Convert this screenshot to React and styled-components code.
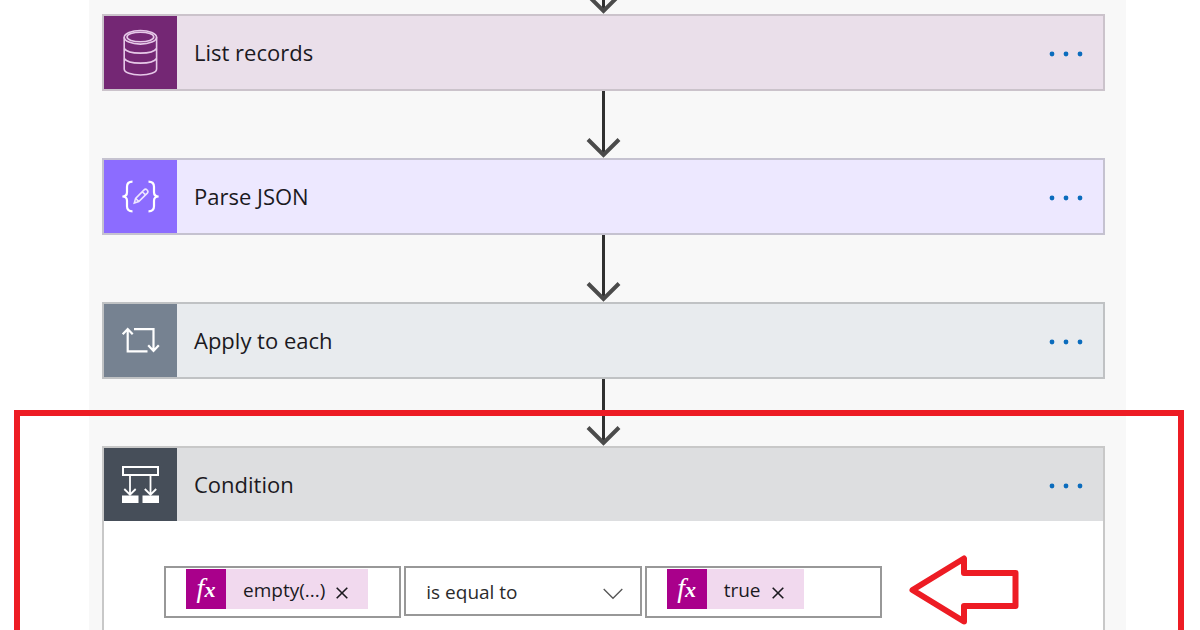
import React from 'react';
import styled, { createGlobalStyle } from 'styled-components';

const GlobalStyle = createGlobalStyle`
  * { box-sizing: border-box; }
  body {
    margin: 0;
    background: #ffffff;
    color: #1b1a1f;
    font-family: 'Open Sans', 'Noto Sans', sans-serif;
  }
`;

const Page = styled.main`
  position: relative;
  display: flex;
  min-height: 100vh;
  padding: 0 74px 0 89px;
`;

const Canvas = styled.section`
  flex: 1;
  display: flex;
  flex-direction: column;
  padding: 0 21px 0 13px;
  background: #f8f8f8;
`;

const ConnectorBox = styled.div`
  display: flex;
  justify-content: center;
  align-items: flex-end;
  height: ${(p) => (p.$short ? 14 : 67)}px;
  overflow: hidden;

  svg { flex: none; display: block; }
`;

const Card = styled.article`
  border: 2px solid ${(p) => p.$border};
  background: #ffffff;

  ${(p) => p.$open && 'flex: 1; border-bottom: 0;'}
`;

const CardHeader = styled.header`
  display: flex;
  align-items: center;
  height: 73px;
  padding-right: 17px;
  background: ${(p) => p.$fill};
`;

const IconTile = styled.div`
  flex: none;
  width: 73px;
  height: 73px;
  background: ${(p) => p.$fill};

  svg { display: block; }
`;

const Title = styled.h2`
  flex: 1;
  margin: 0;
  padding: 0 0 1px 17px;
  font-size: 22px;
  line-height: 32px;
  font-weight: 400;
`;

const MenuButton = styled.button`
  display: flex;
  padding: 3px 0 0;
  border: 0;
  background: none;
  cursor: pointer;
`;

const CardBody = styled.div`
  display: flex;
  align-items: center;
  padding: 34px 60px 0;
`;

const Fields = styled.form`
  flex: 0 1 718px;
  display: grid;
  grid-template-columns: repeat(3, minmax(0, 1fr));
  align-items: start;
  gap: 3px;
`;

const TokenField = styled.div`
  height: 52px;
  padding: 1px 20px;
  border: 2px solid #989898;
  background: #ffffff;
`;

const Token = styled.span`
  display: inline-flex;
  align-items: center;
  height: 40px;
  padding-right: 18px;
  background: #f1d9ee;
  font-size: 19px;
  line-height: 28px;
`;

const TokenText = styled.span`
  padding-top: 2px;
`;

const FxBadge = styled.span`
  display: flex;
  align-items: baseline;
  justify-content: center;
  width: 40px;
  height: 40px;
  margin-right: 17px;
  background: #a9008b;
  color: #ffffff;
  font: italic 400 28px/38px 'Liberation Serif', serif;

  small { font-size: 22px; font-weight: 700; }
`;

const RemoveButton = styled.button`
  display: flex;
  margin-left: 9px;
  padding: 8px 0 0;
  border: 0;
  background: none;
  cursor: pointer;
`;

const SelectBox = styled.div`
  display: grid;
  align-items: center;
  height: 50px;
  border: 2px solid #989898;

  > * { grid-area: 1 / 1; }
  svg { justify-self: end; margin: 6px 17px 0 0; pointer-events: none; }
`;

const OperatorSelect = styled.select`
  width: 100%;
  height: 46px;
  padding: 2px 48px 0 20px;
  border: 0;
  background: #ffffff;
  color: #2b2b2b;
  font: 400 19px/28px 'Open Sans', 'Noto Sans', sans-serif;
  appearance: none;
`;

const Pointer = styled.svg`
  flex: none;
  margin-left: 26px;
`;

const Highlight = styled.div`
  position: absolute;
  top: 410px;
  right: 16px;
  bottom: 0;
  left: 14px;
  border: 6px solid #ed1c24;
  border-bottom: 0;
  pointer-events: none;
`;

const DatabaseIcon = () => (
  <svg width="73" height="73" viewBox="0 0 73 73" fill="none" stroke="#e6c8e8" strokeWidth="1.6" aria-hidden="true">
    <ellipse cx="36.4" cy="21.3" rx="16.2" ry="6.8" />
    <ellipse cx="36.4" cy="21" rx="13.400" ry="4.800" />
    <path d="M20.200 21.300V53c0 3.600 7 6 16.200 6s16.200-2.400 16.200-6V21.300" />
    <path d="M20.200 32.500c2 3.200 8 4.600 16.200 4.600s14.200-1.400 16.200-4.600M20.200 42.500c2 3.200 8 4.600 16.200 4.600s14.200-1.400 16.200-4.600" />
  </svg>
);

const JsonIcon = () => (
  <svg width="73" height="73" viewBox="0 0 73 73" fill="none" stroke="#ffffff" strokeWidth="2.2" aria-hidden="true">
    <path d="M28.500 21.700c-4 0-5.500 1.600-5.500 5v5.500c0 2.800-1.400 4.200-4.600 4.300 3.200.1 4.600 1.500 4.600 4.300v5.500c0 3.400 1.500 5 5.500 5" />
    <path d="M44.500 21.700c4 0 5.500 1.600 5.500 5v5.500c0 2.800 1.400 4.200 4.600 4.300-3.200.1-4.600 1.500-4.600 4.300v5.500c0 3.400-1.500 5-5.500 5" />
    <path d="M30.300 43l1.300-4.600 8.500-8.500c1.900-1.900 5 1.200 3.200 3.200l-8.500 8.500zM38.300 31.700l3.200 3.200M31.600 38.400l3.200 3.200" stroke="#eee6ff" strokeWidth="1.600" />
  </svg>
);

const LoopIcon = () => (
  <svg width="73" height="73" viewBox="0 0 73 73" fill="none" stroke="#ffffff" strokeWidth="2.200" aria-hidden="true">
    <path d="M18.700 30.300l5-5.300 5 5.300M23.700 25v22.300h19.800M30 25.200h19.500v21.600M44.200 41.300l5.300 5.700 5.300-5.700" />
  </svg>
);

const ConditionIcon = () => (
  <svg width="73" height="73" viewBox="0 0 73 73" fill="none" stroke="#ffffff" strokeWidth="2" aria-hidden="true">
    <path d="M19 19h35v8H19z" />
    <path d="M26 27v19M46.500 27v19M20.300 41l5.700 5.700 5.700-5.700M40.800 41l5.700 5.700 5.700-5.700" strokeWidth="1.800" />
    <path d="M18 47.500h16.500V55H18zM38.500 47.500H55V55H38.500z" fill="#ffffff" stroke="none" />
  </svg>
);

const Connector = ({ short }) => (
  <ConnectorBox $short={short}>
    <svg width="35" height="67" viewBox="0 0 35 67" fill="none" aria-hidden="true">
      <path d="M17.500 0v64" stroke="#303030" strokeWidth="3" />
      <path d="M2 48.500l15.500 15.500L33 48.500" stroke="#4b4b4b" strokeWidth="4" />
    </svg>
  </ConnectorBox>
);

const Step = ({ title, icon, tile, fill, border, open, children }) => (
  <Card $border={border} $open={open}>
    <CardHeader $fill={fill}>
      <IconTile $fill={tile}>{icon}</IconTile>
      <Title>{title}</Title>
      <MenuButton type="button" aria-label={`${title} menu`}>
        <svg width="40" height="8" viewBox="0 0 40 8" fill="#0b6cbd" aria-hidden="true">
          <circle cx="6" cy="4" r="2.400" />
          <circle cx="20" cy="4" r="2.400" />
          <circle cx="34" cy="4" r="2.400" />
        </svg>
      </MenuButton>
    </CardHeader>
    {children}
  </Card>
);

const Expression = ({ label, text }) => (
  <TokenField role="group" aria-label={label}>
    <Token>
      <FxBadge aria-hidden="true">f<small>x</small></FxBadge>
      <TokenText>{text}</TokenText>
      <RemoveButton type="button" aria-label={`Remove ${text}`}>
        <svg width="16" height="16" viewBox="0 0 16 16" stroke="#1b1a1f" strokeWidth="1.600" aria-hidden="true">
          <path d="M2.700 2.700l10.600 10.600M13.300 2.700L2.700 13.300" />
        </svg>
      </RemoveButton>
    </Token>
  </TokenField>
);

export default function App() {
  return (
    <>
      <GlobalStyle />
      <Page>
        <Canvas>
          <Connector short />
          <Step title="List records" icon={<DatabaseIcon />} tile="#742774" fill="#eadfea" border="#cbc3cb" />
          <Connector />
          <Step title="Parse JSON" icon={<JsonIcon />} tile="#8c6cff" fill="#ede8ff" border="#c5c2d0" />
          <Connector />
          <Step title="Apply to each" icon={<LoopIcon />} tile="#768291" fill="#e8ebee" border="#c0c2c4" />
          <Connector />
          <Step title="Condition" icon={<ConditionIcon />} tile="#464e59" fill="#dddee0" border="#c8c8c8" open>
            <CardBody>
              <Fields>
                <Expression label="Left value" text="empty(...)" />
                <SelectBox>
                  <OperatorSelect aria-label="Operator" defaultValue="eq">
                    <option value="eq">is equal to</option>
                  </OperatorSelect>
                  <svg width="20" height="12" viewBox="0 0 20 12" fill="none" stroke="#555555" strokeWidth="1.300" aria-hidden="true">
                    <path d="M.7 1l9.300 9.300L19.300 1" />
                  </svg>
                </SelectBox>
                <Expression label="Right value" text="true" />
              </Fields>
              <Pointer width="112" height="74" viewBox="0 0 112 74" fill="#ffffff" stroke="#ed1c24" strokeWidth="6" strokeLinejoin="round" aria-hidden="true">
                <path d="M4.500 35L56 3.500V18h51.500v33H56v15.500z" />
              </Pointer>
            </CardBody>
          </Step>
        </Canvas>
        <Highlight />
      </Page>
    </>
  );
}
